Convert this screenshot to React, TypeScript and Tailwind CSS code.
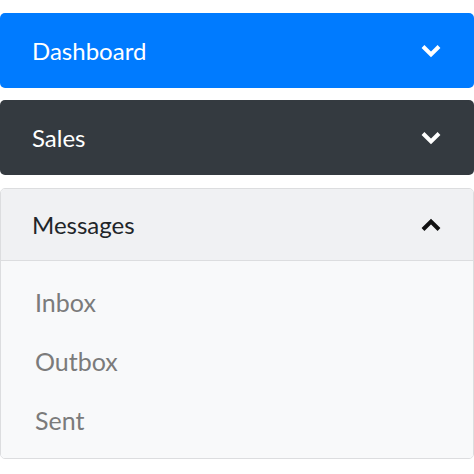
import React from 'react';

type Section = {
  title: string;
  tone: 'primary' | 'dark' | 'light';
  open?: boolean;
  items?: string[];
};

const sections: Section[] = [
  { title: 'Dashboard', tone: 'primary' },
  { title: 'Sales', tone: 'dark' },
  { title: 'Messages', tone: 'light', open: true, items: ['Inbox', 'Outbox', 'Sent'] },
];

const Chevron = ({ up, color }: { up?: boolean; color: string }) => (
  <svg width="22" height="14" viewBox="0 0 22 14" className="shrink-0">
    <polyline
      points={up ? '3,11.5 11,3.5 19,11.5' : '3,2.5 11,10.5 19,2.5'}
      fill="none"
      stroke={color}
      strokeWidth="4"
      strokeLinejoin="miter"
    />
  </svg>
);

const App = () => {
  return (
    <div className="w-[474px] h-[474px] bg-white pt-[13px] font-['Lato','Open_Sans',sans-serif]">
      {sections.map((s) => {
        if (s.tone === 'light') {
          return (
            <div key={s.title} className="rounded-[5px] border border-[#dcdddf] overflow-hidden">
              <div className="h-[72px] flex items-center justify-between pl-[31px] pr-[31px] bg-[#f0f1f3] border-b border-[#dcdddf]">
                <span className="text-[24px] text-[#212529]">{s.title}</span>
                <Chevron up color="#111" />
              </div>
              <ul className="bg-[#f8f9fa] pt-[12px] pb-[8px]">
                {s.items?.map((item) => (
                  <li key={item} className="h-[59px] flex items-center pl-[34px] text-[25px] text-[#7b7b7b]">
                    {item}
                  </li>
                ))}
              </ul>
            </div>
          );
        }
        return (
          <div
            key={s.title}
            className={`h-[75px] rounded-[5px] flex items-center justify-between pl-[32px] pr-[32px] text-white ${
              s.tone === 'primary' ? 'bg-[#007bff] mb-[12px]' : 'bg-[#343a40] mb-[13px]'
            }`}
          >
            <span className="text-[24px]">{s.title}</span>
            <Chevron color="#fff" />
          </div>
        );
      })}
    </div>
  );
};

export default App;
